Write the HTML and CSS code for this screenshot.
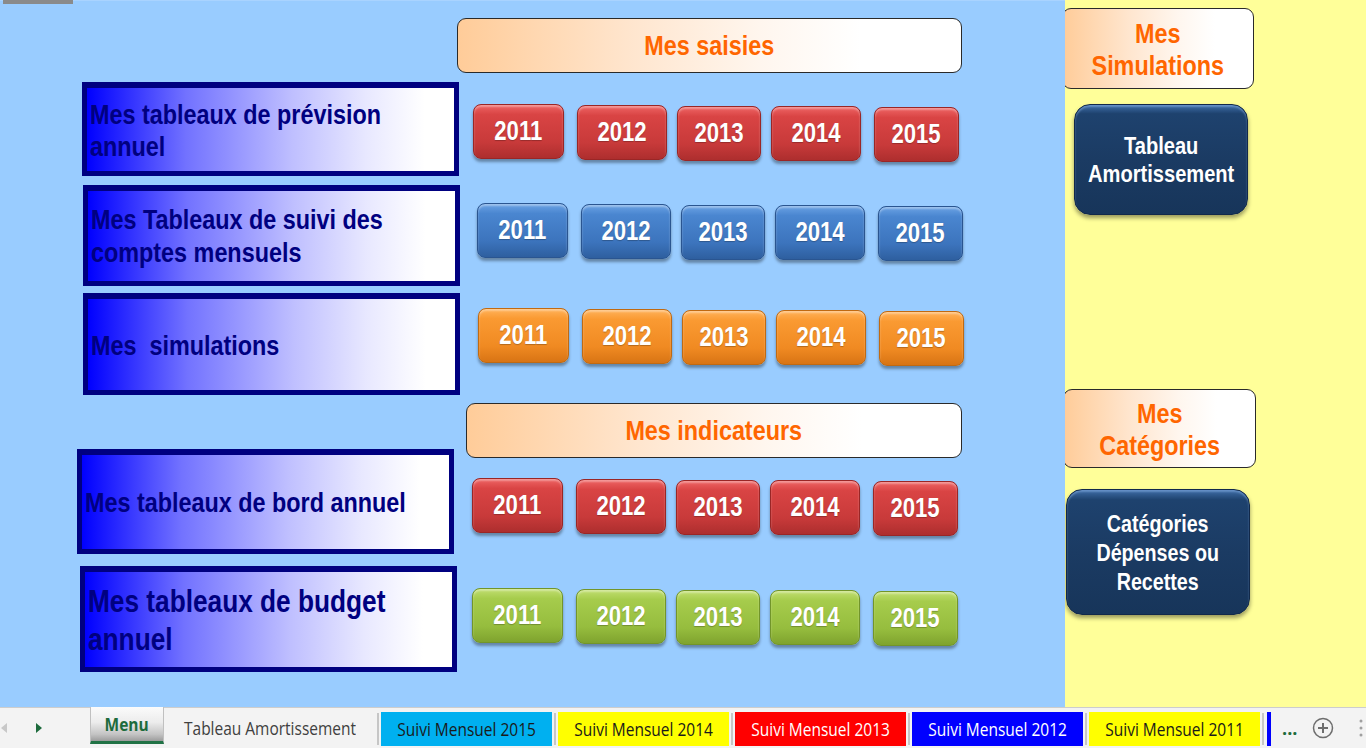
FILE: index.html
```html
<!DOCTYPE html>
<html lang="fr">
<head>
<meta charset="utf-8">
<title>Menu</title>
<link rel="stylesheet" href="styles.css">
</head>
<body>
<div class="sheet">
  <div class="blue-area">
    <div class="thumb"></div>
    <div class="labels">
      <div class="label l1"><span class="ltxt">Mes tableaux de prévision annuel</span></div>
      <div class="label l2"><span class="ltxt">Mes Tableaux de suivi des comptes mensuels</span></div>
      <div class="label l3"><span class="ltxt">Mes&nbsp; simulations</span></div>
      <div class="label l4"><span class="ltxt">Mes tableaux de bord annuel</span></div>
      <div class="label l5"><span class="ltxt">Mes tableaux de budget annuel</span></div>
    </div>
    <div class="actions">
      <div class="head h1"><span class="sq">Mes saisies</span></div>
      <div class="btnrow r1">
        <div class="btn red"><span class="sq">2011</span></div><div class="btn red"><span class="sq">2012</span></div><div class="btn red"><span class="sq">2013</span></div><div class="btn red"><span class="sq">2014</span></div><div class="btn red"><span class="sq">2015</span></div>
      </div>
      <div class="btnrow r2">
        <div class="btn blue"><span class="sq">2011</span></div><div class="btn blue"><span class="sq">2012</span></div><div class="btn blue"><span class="sq">2013</span></div><div class="btn blue"><span class="sq">2014</span></div><div class="btn blue"><span class="sq">2015</span></div>
      </div>
      <div class="btnrow r3">
        <div class="btn orange"><span class="sq">2011</span></div><div class="btn orange"><span class="sq">2012</span></div><div class="btn orange"><span class="sq">2013</span></div><div class="btn orange"><span class="sq">2014</span></div><div class="btn orange"><span class="sq">2015</span></div>
      </div>
      <div class="head h2"><span class="sq">Mes indicateurs</span></div>
      <div class="btnrow r4">
        <div class="btn red"><span class="sq">2011</span></div><div class="btn red"><span class="sq">2012</span></div><div class="btn red"><span class="sq">2013</span></div><div class="btn red"><span class="sq">2014</span></div><div class="btn red"><span class="sq">2015</span></div>
      </div>
      <div class="btnrow r5">
        <div class="btn green"><span class="sq">2011</span></div><div class="btn green"><span class="sq">2012</span></div><div class="btn green"><span class="sq">2013</span></div><div class="btn green"><span class="sq">2014</span></div><div class="btn green"><span class="sq">2015</span></div>
      </div>
    </div>
  </div>
  <div class="yellow-area">
    <div class="head side-head sh1"><span class="sq">Mes<br>Simulations</span></div>
    <div class="navy nb1"><span class="sq">Tableau<br>Amortissement</span></div>
    <div class="head side-head sh2"><span class="sq">Mes<br>Catégories</span></div>
    <div class="navy nb2"><span class="sq">Catégories<br>Dépenses ou<br>Recettes</span></div>
  </div>
</div>
<div class="tabbar">
  <div class="nav">
    <svg class="arrow" width="6" height="10" viewBox="0 0 6 10"><path d="M6 0 L0 5 L6 10 Z" fill="#c8c8c8"/></svg>
    <svg class="arrow arrow-r" width="6" height="10" viewBox="0 0 6 10"><path d="M0 0 L6 5 L0 10 Z" fill="#1d6b3c"/></svg>
  </div>
  <div class="tab-menu"><span class="tq">Menu</span></div>
  <div class="tab-plain"><span class="tq">Tableau Amortissement</span></div>
  <div class="sep"></div>
  <div class="tab t-cyan"><span class="tq">Suivi Mensuel 2015</span></div>
  <div class="sep"></div>
  <div class="tab t-yellow"><span class="tq">Suivi Mensuel 2014</span></div>
  <div class="sep"></div>
  <div class="tab t-red"><span class="tq">Suivi Mensuel 2013</span></div>
  <div class="sep"></div>
  <div class="tab t-blue"><span class="tq">Suivi Mensuel 2012</span></div>
  <div class="sep"></div>
  <div class="tab t-yellow"><span class="tq">Suivi Mensuel 2011</span></div>
  <div class="sep"></div>
  <div class="strip"></div>
  <div class="more">...</div>
  <svg class="plus" width="22" height="22" viewBox="0 0 22 22"><circle cx="11" cy="11" r="9.5" fill="none" stroke="#6d6d6d" stroke-width="1.5"/><path d="M11 6 V16 M6 11 H16" stroke="#6d6d6d" stroke-width="2"/></svg>
  <svg class="dots" width="4" height="18" viewBox="0 0 4 18"><circle cx="2" cy="2" r="1.5" fill="#a0a0a0"/><circle cx="2" cy="9" r="1.5" fill="#a0a0a0"/><circle cx="2" cy="16" r="1.5" fill="#a0a0a0"/></svg>
</div>
</body>
</html>
```
FILE: styles.css
```css
* { box-sizing: border-box; }
html, body { margin: 0; padding: 0; }
body {
  width: 1366px;
  height: 748px;
  overflow: hidden;
  font-family: "Liberation Sans", Arial, sans-serif;
  background: #f3f3f3;
}
/* narrow look: Arial Narrow is ~82% of Arial's width */
.sq {
  display: inline-block;
  white-space: nowrap;
  transform: scaleX(0.82);
  transform-origin: center center;
  text-align: center;
}
.sheet {
  display: flex;
  height: 707px;
}
.blue-area {
  position: relative;
  width: 1065px;
  height: 707px;
  background: #99ccff;
  border-top: 1px solid #a9d3ff;
  display: flex;
  align-items: flex-start;
}
.thumb {
  position: absolute;
  left: 3px;
  top: -1px;
  width: 70px;
  height: 4px;
  background: #8a8a8a;
}
.labels {
  width: 457px;
  flex: none;
  padding-left: 77px;
  padding-top: 81px;
  display: flex;
  flex-direction: column;
  align-items: flex-start;
}
.label {
  width: 377px;
  border: 5px solid #000080;
  border-top-width: 6px;
  background: linear-gradient(90deg, #0000ff 0%, #7272ff 27%, #bfbfff 56%, #e8e8ff 76%, #ffffff 92%);
  color: #000080;
  font-weight: bold;
  font-size: 28.5px;
  line-height: 32px;
  padding: 0 3px;
  display: flex;
  align-items: center;
  flex: none;
  overflow: visible;
}
.ltxt {
  display: block;
  flex: none;
  width: 440px;
  transform: scaleX(0.82);
  transform-origin: left center;
}
.l1 { height: 94px; margin-left: 5px; }
.l2 { height: 101px; margin-left: 6px; margin-top: 9px; line-height: 33px; }
.l3 { height: 102px; margin-left: 6px; margin-top: 7px; }
.l4 { height: 105px; margin-left: 0; margin-top: 54px; }
.l5 { height: 106px; margin-left: 3px; margin-top: 12px; font-size: 32px; line-height: 38px; }

.actions {
  width: 510px;
  flex: none;
  padding-top: 17px;
  display: flex;
  flex-direction: column;
  align-items: flex-start;
}
.head {
  border: 1.5px solid #2a2a2a;
  border-radius: 9px;
  background: linear-gradient(90deg, #ffcc99 0%, #ffe6cf 35%, #fff6ee 60%, #ffffff 80%);
  color: #ff6600;
  font-weight: bold;
  font-size: 28.5px;
  display: flex;
  align-items: center;
  justify-content: center;
  text-align: center;
}
.h1 { width: 505px; height: 55px; }
.h2 { width: 496px; height: 55px; margin-left: 9px; margin-top: 37px; }

.btnrow {
  display: flex;
  align-items: flex-start;
  height: 58px;
}
.r1 { margin-top: 31px; margin-left: 16px; }
.r2 { margin-top: 41px; margin-left: 20px; }
.r3 { margin-top: 47px; margin-left: 21px; }
.r4 { margin-top: 20px; margin-left: 15px; }
.r5 { margin-top: 52px; margin-left: 15px; }

.btn {
  height: 55px;
  border-radius: 8px;
  color: #fff;
  font-weight: bold;
  font-size: 27px;
  display: flex;
  align-items: center;
  justify-content: center;
  flex: none;
  text-shadow: 0 1px 1px rgba(0,0,0,0.25);
  box-shadow: 0 3px 3px rgba(0,0,0,0.35), inset 0 2px 2px rgba(255,255,255,0.35);
}
.btn:nth-child(1) { width: 91px; }
.btn:nth-child(2) { width: 90px; margin-left: 13px; margin-top: 1px; }
.btn:nth-child(3) { width: 84px; margin-left: 10px; margin-top: 2px; }
.btn:nth-child(4) { width: 90px; margin-left: 10px; margin-top: 2px; }
.btn:nth-child(5) { width: 85px; margin-left: 13px; margin-top: 3px; }

.red {
  background: linear-gradient(to bottom, #ee6464 0%, #d94444 18%, #c83a3a 70%, #ad2e2e 100%);
  border: 1px solid #9a2626;
}
.blue {
  background: linear-gradient(to bottom, #6aa2e4 0%, #4a86d0 18%, #3c74bd 70%, #2e5f9f 100%);
  border: 1px solid #2a5590;
}
.orange {
  background: linear-gradient(to bottom, #ffb25a 0%, #fa9a32 18%, #f08a22 70%, #d87414 100%);
  border: 1px solid #c06a12;
}
.green {
  background: linear-gradient(to bottom, #c0de70 0%, #a6cc4c 18%, #96bd3e 70%, #7fa32e 100%);
  border: 1px solid #72952a;
}

.yellow-area {
  width: 301px;
  height: 707px;
  background: #ffff99;
  padding-top: 8px;
  display: flex;
  flex-direction: column;
  align-items: flex-start;
}
.side-head { line-height: 32px; }
.sh1 { width: 192px; height: 81px; margin-left: -3px; }
.sh2 { width: 193px; height: 79px; margin-left: -2px; margin-top: 174px; }
.navy {
  border-radius: 16px;
  background: linear-gradient(to bottom, #3f6ea8 0%, #1e426e 8%, #1b3b63 50%, #17355a 100%);
  border: 1px solid #12294a;
  box-shadow: 0 3px 4px rgba(0,0,0,0.4), inset 0 2px 2px rgba(140,180,230,0.5);
  color: #fff;
  font-weight: bold;
  font-size: 24.5px;
  line-height: 28px;
  text-align: center;
  display: flex;
  align-items: center;
  justify-content: center;
}
.nb1 { width: 174px; height: 111px; margin-left: 9px; margin-top: 15px; }
.nb2 { width: 184px; height: 126px; margin-left: 1px; margin-top: 21px; line-height: 29px; font-size: 24px; }

.tabbar {
  height: 41px;
  border-top: 1px solid #cdcdcd;
  background: #f3f3f3;
  display: flex;
  align-items: flex-start;
  font-family: "Open Sans", "Noto Sans", sans-serif;
  font-size: 18px;
  color: #333;
}
.tabbar > * { flex: none; }
.tq {
  display: inline-block;
  white-space: nowrap;
  transform: scaleX(0.86);
  transform-origin: center center;
}
.nav {
  width: 90px;
  height: 40px;
  display: flex;
  align-items: center;
  padding-left: 1px;
}
.arrow-r { margin-left: 29px; }
.tab-menu {
  width: 74px;
  height: 37px;
  margin-top: -1px;
  background: linear-gradient(to bottom, #fbfbfb 0%, #ececec 45%, #c4c4c4 80%, #9c9c9c 100%);
  border-left: 1px solid #c0c0c0;
  border-right: 1px solid #c0c0c0;
  border-bottom: 3px solid #217346;
  color: #1d6b3c;
  font-weight: bold;
  display: flex;
  align-items: center;
  justify-content: center;
}
.tab-plain {
  width: 211px;
  height: 40px;
  display: flex;
  align-items: center;
  justify-content: center;
  color: #404040;
  overflow: visible;
}
.sep {
  width: 2px;
  height: 32px;
  margin: 5px 2px 0 2px;
  background: #c6c6c6;
}
.tab {
  width: 171px;
  height: 34px;
  margin-top: 4px;
  display: flex;
  align-items: center;
  justify-content: center;
}
.t-cyan { background: #00b0f0; color: #1a1a1a; }
.t-yellow { background: #ffff00; color: #1a1a1a; }
.t-red { background: #ff0000; color: #fff; }
.t-blue { background: #0000ff; color: #fff; }
.strip {
  width: 4px;
  height: 34px;
  margin-top: 4px;
  margin-left: 1px;
  background: #0000ff;
}
.more {
  margin-left: 11px;
  height: 40px;
  line-height: 40px;
  color: #1d6b3c;
  font-weight: bold;
  font-size: 18px;
}
.plus { margin-left: 15px; margin-top: 9px; }
.dots { margin-left: 25px; margin-top: 11px; }
```
